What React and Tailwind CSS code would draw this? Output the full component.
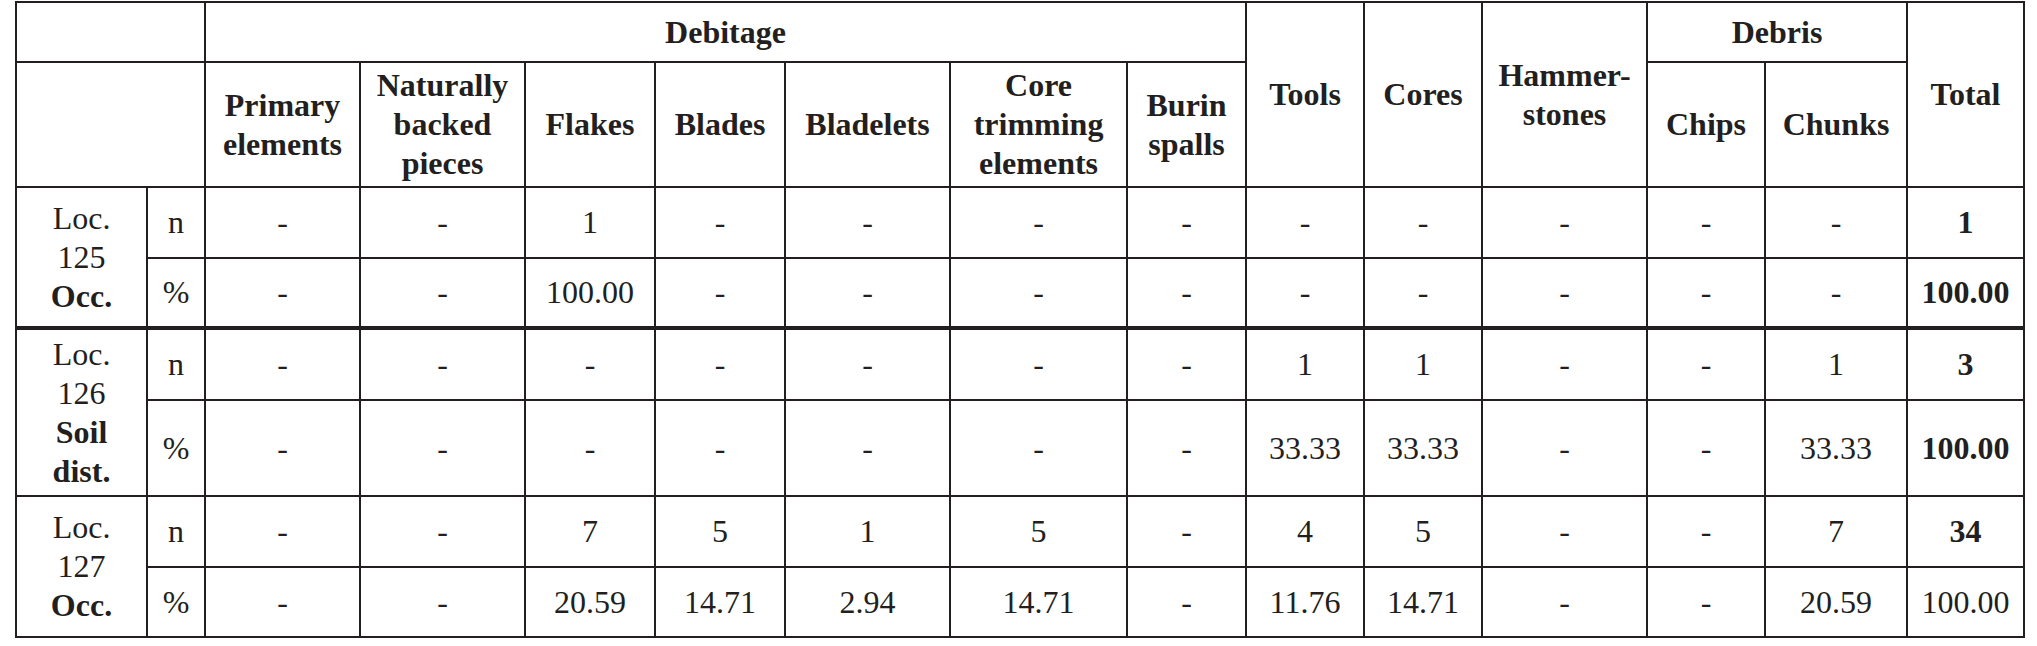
const cols = [131, 58, 155, 165, 130, 130, 165, 177, 119, 118, 118, 165, 118, 142, 117]

const groups = [
  {
    label: [
      { text: 'Loc.', bold: false },
      { text: '125', bold: false },
      { text: 'Occ.', bold: true },
    ],
    n: ['-', '-', '1', '-', '-', '-', '-', '-', '-', '-', '-', '-', '1'],
    pct: ['-', '-', '100.00', '-', '-', '-', '-', '-', '-', '-', '-', '-', '100.00'],
    pctBoldTotal: true,
    heights: ['h-[71px]', 'h-[71px]'],
  },
  {
    label: [
      { text: 'Loc.', bold: false },
      { text: '126', bold: false },
      { text: 'Soil', bold: true },
      { text: 'dist.', bold: true },
    ],
    n: ['-', '-', '-', '-', '-', '-', '-', '1', '1', '-', '-', '1', '3'],
    pct: ['-', '-', '-', '-', '-', '-', '-', '33.33', '33.33', '-', '-', '33.33', '100.00'],
    pctBoldTotal: true,
    heights: ['h-[71px]', 'h-[96px]'],
  },
  {
    label: [
      { text: 'Loc.', bold: false },
      { text: '127', bold: false },
      { text: 'Occ.', bold: true },
    ],
    n: ['-', '-', '7', '5', '1', '5', '-', '4', '5', '-', '-', '7', '34'],
    pct: ['-', '-', '20.59', '14.71', '2.94', '14.71', '-', '11.76', '14.71', '-', '-', '20.59', '100.00'],
    pctBoldTotal: false,
    heights: ['h-[71px]', 'h-[70px]'],
  },
]

// shared cell look: right + bottom rules only, the table draws left + top
const cell = 'border-r-2 border-b-2 border-[#231f20] p-0 text-center align-middle'

const App = () => {
  return (
    <div className="min-h-[646px] w-[2037px] bg-white pl-[15px] pt-px font-['Liberation_Serif',serif] text-[32px] leading-[39px] text-[#231f20]">
      <table className="table-fixed border-separate border-spacing-0 border-l-2 border-t-2 border-[#231f20]">
        <colgroup>
          {cols.map((w, i) => (
            <col key={i} style={{ width: w }} />
          ))}
        </colgroup>
        <thead className="font-bold">
          <tr className="h-[60px]">
            <th colSpan={2} className={cell}></th>
            <th colSpan={7} className={cell}>Debitage</th>
            <th rowSpan={2} className={cell}>Tools</th>
            <th rowSpan={2} className={cell}>Cores</th>
            <th rowSpan={2} className={cell}>
              Hammer-
              <br />
              stones
            </th>
            <th colSpan={2} className={cell}>Debris</th>
            <th rowSpan={2} className={cell}>Total</th>
          </tr>
          <tr className="h-[125px]">
            <th colSpan={2} className={cell}></th>
            <th className={cell}>
              Primary
              <br />
              elements
            </th>
            <th className={cell}>
              Naturally
              <br />
              backed
              <br />
              pieces
            </th>
            <th className={cell}>Flakes</th>
            <th className={cell}>Blades</th>
            <th className={cell}>Bladelets</th>
            <th className={cell}>
              Core
              <br />
              trimming
              <br />
              elements
            </th>
            <th className={cell}>
              Burin
              <br />
              spalls
            </th>
            <th className={cell}>Chips</th>
            <th className={cell}>Chunks</th>
          </tr>
        </thead>
        <tbody>
          {groups.map((g, gi) => {
            // first group closes with a heavier rule
            const edge = gi === 0 ? 'border-b-4' : ''
            return [
              <tr key={`${gi}-n`} className={g.heights[0]}>
                <td rowSpan={2} className={`${cell} ${edge}`}>
                  {g.label.map((l, li) => (
                    <div key={li} className={l.bold ? 'font-bold' : ''}>
                      {l.text}
                    </div>
                  ))}
                </td>
                <td className={cell}>n</td>
                {g.n.map((v, i) => (
                  <td
                    key={i}
                    className={`${cell} ${i === g.n.length - 1 ? 'font-bold' : ''}`}
                  >
                    {v}
                  </td>
                ))}
              </tr>,
              <tr key={`${gi}-p`} className={g.heights[1]}>
                <td className={`${cell} ${edge}`}>%</td>
                {g.pct.map((v, i) => (
                  <td
                    key={i}
                    className={`${cell} ${edge} ${
                      i === g.pct.length - 1 && g.pctBoldTotal ? 'font-bold' : ''
                    }`}
                  >
                    {v}
                  </td>
                ))}
              </tr>,
            ]
          })}
        </tbody>
      </table>
    </div>
  )
}

export default App
